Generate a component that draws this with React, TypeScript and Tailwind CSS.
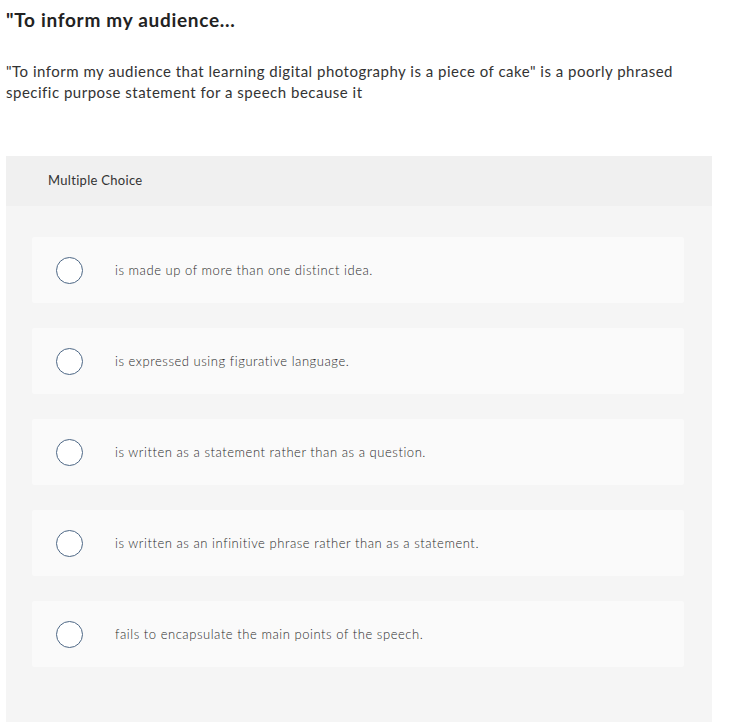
const OPTIONS = [
  "is made up of more than one distinct idea.",
  "is expressed using figurative language.",
  "is written as a statement rather than as a question.",
  "is written as an infinitive phrase rather than as a statement.",
  "fails to encapsulate the main points of the speech.",
];

function Radio() {
  return (
    <span className="block h-[27px] w-[27px] shrink-0 rounded-full border-[1.5px] border-[#4d6785] bg-white" />
  );
}

export default function App() {
  return (
    <div className="min-h-[728px] bg-white font-['Lato',_'Open_Sans',_sans-serif] text-[#333]">
      <div className="px-[6px] pt-[8px]">
        <h1 className="text-[19px] font-bold leading-[24px] tracking-[0.7px] text-[#222]">"To inform my audience...</h1>
        <p className="mt-[29px] w-[700px] text-[15px] leading-[21px] tracking-[0.5px] text-[#333]">
          "To inform my audience that learning digital photography is a piece of cake" is a poorly phrased
          <br />
          specific purpose statement for a speech because it
        </p>
      </div>

      <section className="ml-[6px] mt-[53px] w-[706px] bg-[#f5f5f5] pb-[55px]">
        <div className="flex h-[50px] items-center bg-[#f0f0f0] pl-[42px] text-[13px] tracking-[0.3px] text-[#333]">
          Multiple Choice
        </div>
        <div className="flex flex-col gap-[25px] pl-[26px] pr-[28px] pt-[31px]">
          {OPTIONS.map((label) => (
            <label
              key={label}
              className="flex h-[66px] items-center rounded-[2px] bg-[#fafafa] pl-[24px]"
            >
              <Radio />
              <span className="ml-[32px] pt-[2px] text-[13px] font-light tracking-[0.55px] text-[#2a2a2a]">{label}</span>
            </label>
          ))}
        </div>
      </section>
    </div>
  );
}
